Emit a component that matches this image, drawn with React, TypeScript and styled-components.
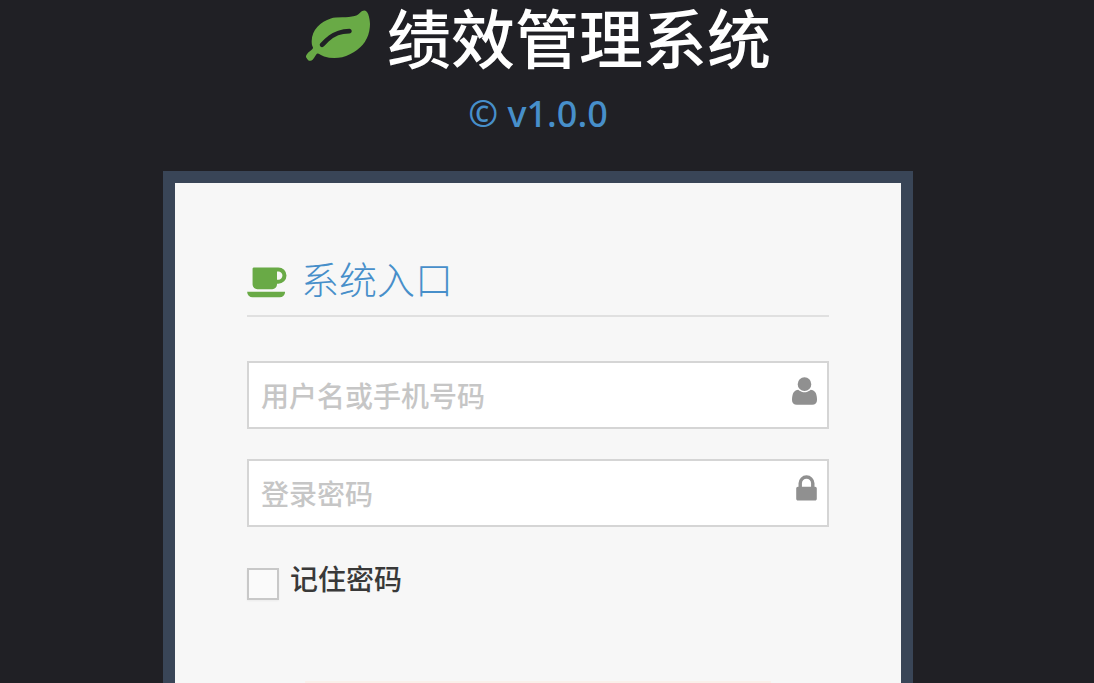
import React from 'react';
import styled, { createGlobalStyle } from 'styled-components';

const GlobalStyle = createGlobalStyle`
  *, *::before, *::after { box-sizing: border-box; }
  body {
    margin: 0;
    background: #202025;
    color: #393939;
    font-family: "Open Sans", "Noto Sans CJK SC", sans-serif;
    font-size: 28px;
    line-height: 40px;
  }
`;

const Page = styled.main`
  display: flex;
  flex-direction: column;
  align-items: center;
  min-height: 100vh;
  padding-right: 18px;
`;

const Header = styled.header`
  display: flex;
  flex-direction: column;
  align-items: center;
  padding-bottom: 35px;
`;

const Title = styled.h1`
  display: flex;
  align-items: flex-end;
  gap: 16px;
  margin: 0;
  color: #fff;
  font-family: "Noto Sans CJK SC", sans-serif;
  font-size: 64px;
  font-weight: 500;
  line-height: 70px;
`;

const Version = styled.p`
  margin: 21px 0 0;
  color: #478fca;
  font-family: "Noto Sans", sans-serif;
  font-size: 36px;
  font-weight: 500;
  line-height: 45px;
`;

const Icon = styled.svg`
  display: block;
  flex: none;
  fill: currentColor;
`;

const GreenIcon = styled(Icon)`
  color: #69aa46;
`;

const FieldIcon = styled(Icon)`
  position: absolute;
  top: 14px;
  right: 12px;
  color: #909090;
  pointer-events: none;
`;

const Panel = styled.section`
  display: flex;
  flex: 1;
  flex-direction: column;
  width: 100%;
  max-width: 750px;
  padding: 72px 72px 0;
  border: solid #394557;
  border-width: 12px 12px 0;
  background: #f7f7f7;
`;

const PanelTitle = styled.h2`
  display: flex;
  align-items: flex-end;
  gap: 13px;
  margin: 0 0 44px;
  padding-bottom: 15px;
  border-bottom: 2px solid #e0e0e0;
  color: #478fca;
  font-family: "Noto Sans CJK SC", sans-serif;
  font-size: 38px;
  font-weight: 200;
  line-height: 45px;
`;

const Form = styled.form`
  display: flex;
  flex-direction: column;
  gap: 30px;
`;

const Field = styled.label`
  position: relative;
  display: block;
`;

const TextInput = styled.input`
  display: block;
  width: 100%;
  height: 68px;
  padding: 0 48px 0 12px;
  border: 2px solid #d5d5d5;
  border-radius: 0;
  outline: 0;
  background: #fff;
  color: #858585;
  font-family: "Noto Sans CJK SC", sans-serif;
  font-size: 28px;
  font-weight: 500;

  &::placeholder {
    color: #c6c6c6;
    opacity: 1;
  }
  &:focus {
    border-color: #f59942;
  }
`;

const Remember = styled.label`
  display: flex;
  align-items: flex-end;
  align-self: flex-start;
  gap: 11px;
  height: 43px;
  font-family: "Noto Sans CJK SC", sans-serif;
  font-weight: 500;
`;

const RememberText = styled.span`
  padding-bottom: 2px;
`;

const Checkbox = styled.input`
  appearance: none;
  width: 32px;
  height: 32px;
  margin: 0;
  border: 2px solid #c8c8c8;
  background: #fafafa;
  box-shadow: 0 1px 2px rgba(0, 0, 0, 0.05);

  &:checked {
    background: #478fca;
  }
`;

const Notice = styled.div`
  align-self: center;
  width: 80%;
  height: 2px;
  margin-top: 81px;
  background: #faf0ea;
`;

export default function App() {
  return (
    <>
      <GlobalStyle />
      <Page>
        <Header>
          <Title>
            <GreenIcon width="66" height="64" viewBox="0 0 1792 1792" aria-hidden="true">
              <path d="M1280 704q0-26-19-45t-45-19q-172 0-318 49.5t-259.5 134-235.5 219.5q-19 21-19 45 0 26 19 45t45 19q24 0 45-19 27-24 74-71t67-66q137-124 268.5-176t313.5-52q26 0 45-19t19-45zm512-198q0 95-20 193-46 224-184.5 383t-357.5 268q-214 108-438 108-148 0-286-47-15-5-88-42t-96-37q-16 0-39.5 32t-45 70-52.5 70-60 32q-43 0-63.5-17.5t-45.5-59.5q-2-4-6-11t-5.5-10-3-9.5-1.5-13.5q0-35 31-73.5t68-65.5 68-56 31-48q0-4-14-38t-16-44q-9-51-9-104 0-115 43.5-220t119-184.5 170.5-139 204-95.5q55-18 145-25.5t179.5-9 178.5-6 163.5-24 113.5-56.5l29.5-29.5 29.5-28 27-20 36.5-16 43.5-4.5q39 0 70.5 46t47.5 112 24 124 8 96z" />
            </GreenIcon>
            绩效管理系统
          </Title>
          <Version>© v1.0.0</Version>
        </Header>
        <Panel>
          <PanelTitle>
            <GreenIcon width="41" height="38" viewBox="0 0 1920 1792" aria-hidden="true">
              <path d="M1664 640q0-80-56-136t-136-56h-64v384h64q80 0 136-56t56-136zm-1664 768h1792q0 106-75 181t-181 75h-1280q-106 0-181-75t-75-181zm1856-768q0 159-112.5 271.5t-271.5 112.5h-64v32q0 92-66 158t-158 66h-704q-92 0-158-66t-66-158v-736q0-26 19-45t45-19h1152q159 0 271.5 112.5t112.5 271.5z" />
            </GreenIcon>
            系统入口
          </PanelTitle>
          <Form onSubmit={(event) => event.preventDefault()}>
            <Field>
              <TextInput type="text" placeholder="用户名或手机号码" aria-label="用户名或手机号码" />
              <FieldIcon width="25" height="32" viewBox="192 0 1408 1792" aria-hidden="true">
                <path d="M1600 1405q0 120-73 189.5t-194 69.5h-874q-121 0-194-69.5t-73-189.5q0-53 3.5-103.5t14-109 26.5-108.5 43-97.5 62-81 85.5-53.5 111.5-20q9 0 42 21.5t74.5 48 108 48 133.5 21.5 133.5-21.5 108-48 74.5-48 42-21.5q61 0 111.5 20t85.5 53.5 62 81 43 97.5 26.5 108.5 14 109 3.5 103.5zm-320-893q0 159-112.5 271.5t-271.5 112.5-271.5-112.5-112.5-271.5 112.5-271.5 271.5-112.5 271.5 112.5 112.5 271.5z" />
              </FieldIcon>
            </Field>
            <Field>
              <TextInput type="password" placeholder="登录密码" aria-label="登录密码" />
              <FieldIcon width="21" height="32" viewBox="320 0 1152 1792" aria-hidden="true">
                <path d="M640 768h512v-192q0-106-75-181t-181-75-181 75-75 181v192zm832 96v576q0 40-28 68t-68 28h-960q-40 0-68-28t-28-68v-576q0-40 28-68t68-28h32v-192q0-184 132-316t316-132 316 132 132 316v192h32q40 0 68 28t28 68z" />
              </FieldIcon>
            </Field>
            <Remember>
              <Checkbox type="checkbox" />
              <RememberText>记住密码</RememberText>
            </Remember>
          </Form>
          <Notice />
        </Panel>
      </Page>
    </>
  );
}
